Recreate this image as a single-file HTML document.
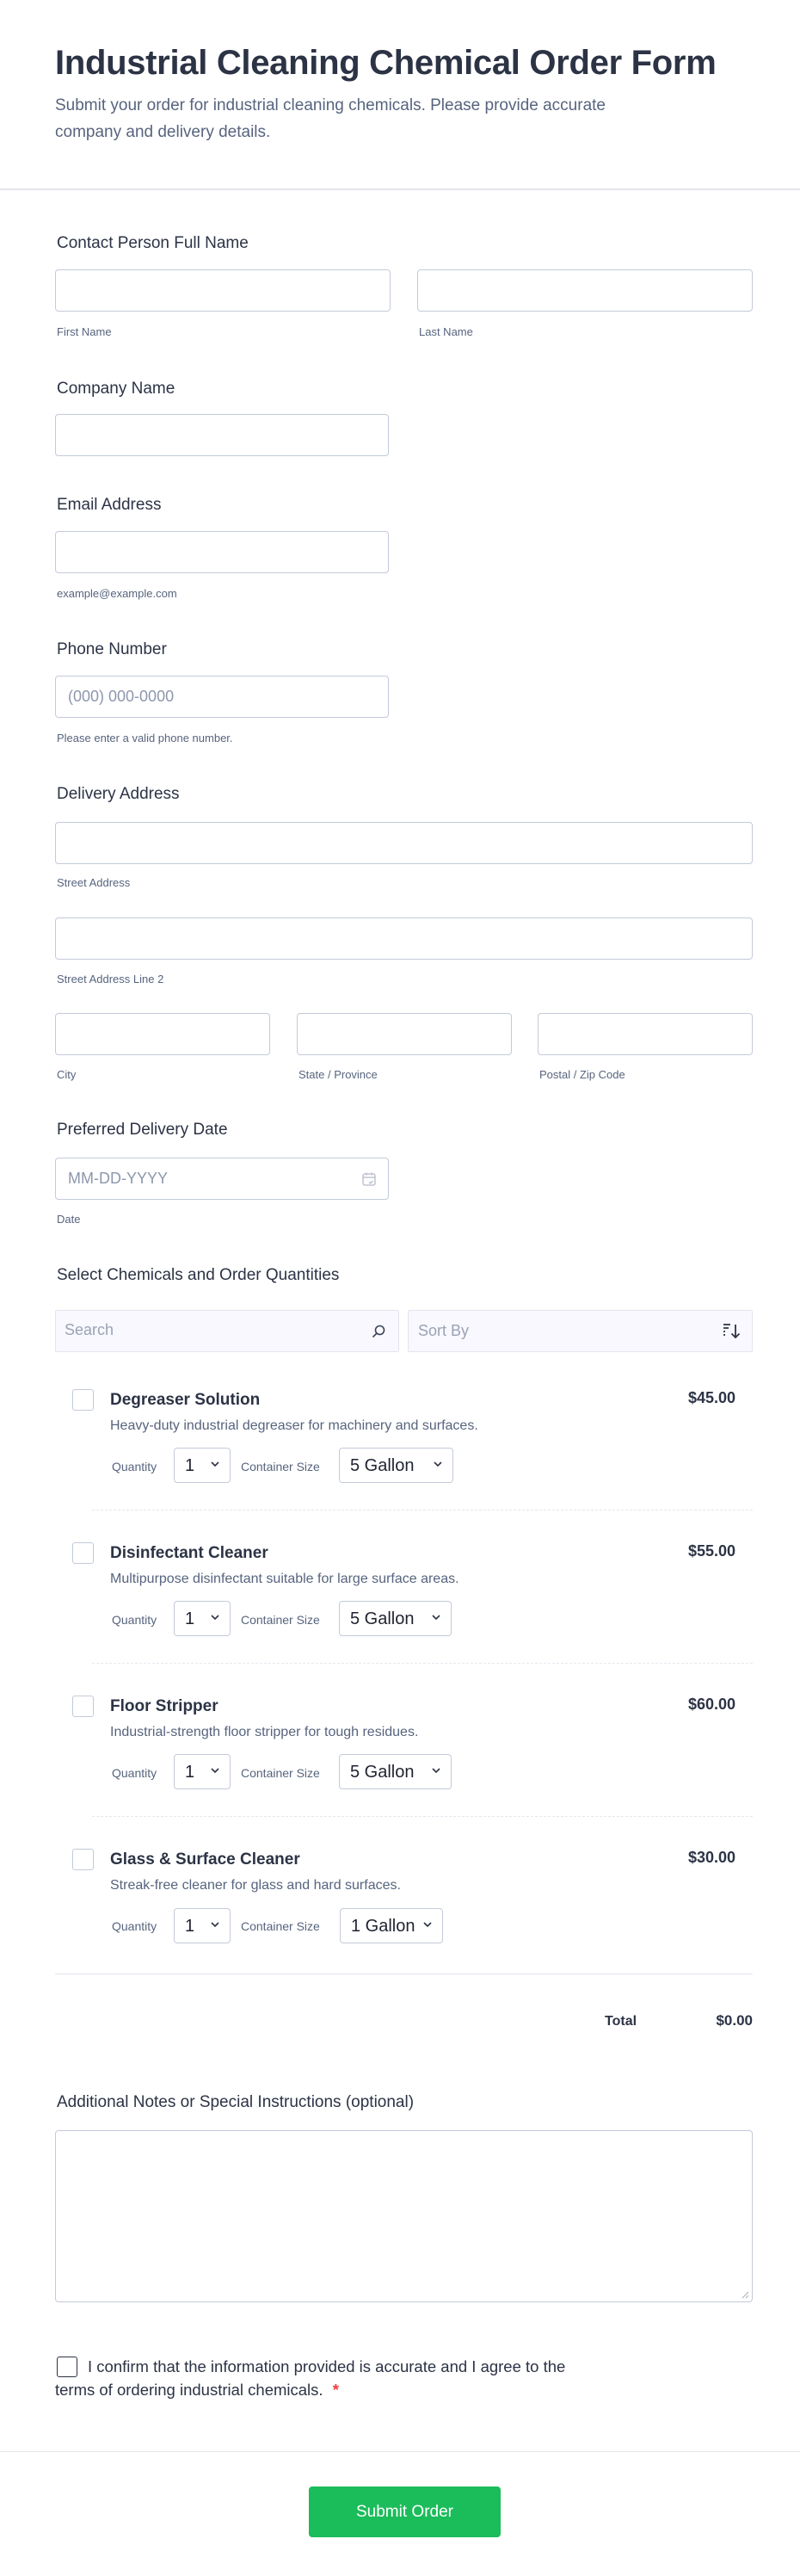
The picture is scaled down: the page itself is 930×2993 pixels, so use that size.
<!DOCTYPE html>
<html><head><meta charset="utf-8"><style>
*{box-sizing:border-box;margin:0;padding:0}
body{width:930px;height:2993px;background:#fff;font-family:"Liberation Sans",Arial,sans-serif;color:#2c3345;position:relative;overflow:hidden}
.a{position:absolute}
h1{position:absolute;left:64px;top:51px;font-size:40px;font-weight:bold;color:#2c3345;letter-spacing:-0.3px}
.sub{left:64px;top:107px;font-size:19px;line-height:31px;color:#57647e;width:720px}
.hr{left:0;width:930px;height:2px;background:#e3e5ec}
.lbl{font-size:19px;color:#2c3345;left:66px}
.in{border:1px solid #c3cad8;border-radius:4px;background:#fff;height:49px}
.sl{font-size:13px;color:#57647e}
.ph{font-size:18px;color:#8d97ac;left:14px;top:13px}
.cb{width:25px;height:25px;border:1px solid #c3cad8;border-radius:3px;left:84px;background:#fff}
.nm{left:128px;font-size:19px;font-weight:bold;color:#2c3345}
.pr{right:75px;font-size:18px;font-weight:bold;color:#2c3345}
.ds{left:128px;font-size:16px;color:#57647e}
.q{font-size:14px;color:#57647e}
.sel{border:1px solid #c3cad8;border-radius:4px;height:41px;background:#fff;font-size:20px;color:#1f2330}
.sel span{position:absolute;left:12px;top:9px}
.sel svg{position:absolute;right:12px;top:15px}
.dot{left:107px;width:768px;border-top:1px dashed #e6e8ef}
</style></head><body>
<h1>Industrial Cleaning Chemical Order Form</h1>
<div class="a sub">Submit your order for industrial cleaning chemicals. Please provide accurate company and delivery details.</div>
<div class="a hr" style="top:219px"></div>

<div class="a lbl" style="top:272px">Contact Person Full Name</div>
<div class="a in" style="left:64px;top:313px;width:390px"></div>
<div class="a in" style="left:485px;top:313px;width:390px"></div>
<div class="a sl" style="left:66px;top:378px">First Name</div>
<div class="a sl" style="left:487px;top:378px">Last Name</div>

<div class="a lbl" style="top:441px">Company Name</div>
<div class="a in" style="left:64px;top:481px;width:388px"></div>

<div class="a lbl" style="top:576px">Email Address</div>
<div class="a in" style="left:64px;top:617px;width:388px"></div>
<div class="a sl" style="left:66px;top:682px">example@example.com</div>

<div class="a lbl" style="top:744px">Phone Number</div>
<div class="a in" style="left:64px;top:785px;width:388px"><div class="a ph">(000) 000-0000</div></div>
<div class="a sl" style="left:66px;top:850px">Please enter a valid phone number.</div>

<div class="a lbl" style="top:912px">Delivery Address</div>
<div class="a in" style="left:64px;top:955px;width:811px"></div>
<div class="a sl" style="left:66px;top:1018px">Street Address</div>
<div class="a in" style="left:64px;top:1066px;width:811px"></div>
<div class="a sl" style="left:66px;top:1130px">Street Address Line 2</div>
<div class="a in" style="left:64px;top:1177px;width:250px"></div>
<div class="a in" style="left:345px;top:1177px;width:250px"></div>
<div class="a in" style="left:625px;top:1177px;width:250px"></div>
<div class="a sl" style="left:66px;top:1241px">City</div>
<div class="a sl" style="left:347px;top:1241px">State / Province</div>
<div class="a sl" style="left:627px;top:1241px">Postal / Zip Code</div>

<div class="a lbl" style="top:1302px">Preferred Delivery Date</div>
<div class="a in" style="left:64px;top:1345px;width:388px"><div class="a ph">MM-DD-YYYY</div>
<svg class="a" style="right:13px;top:15px" width="18" height="18" viewBox="0 0 18 18" fill="none" stroke="#b4bac8" stroke-width="1.3"><rect x="2" y="3" width="14" height="13" rx="2"/><path d="M2 7h14M6 1.5v3M12 1.5v3M9 12.5l1.5 1.5 3-3"/></svg></div>
<div class="a sl" style="left:66px;top:1409px">Date</div>

<div class="a lbl" style="top:1471px">Select Chemicals and Order Quantities</div>
<div class="a" style="left:64px;top:1522px;width:400px;height:49px;background:#f8f8fe;border:1px solid #e3e5ec;border-radius:2px"><div class="a ph" style="left:10px;top:12px;font-size:18px;color:#9aa3b5">Search</div>
<svg class="a" style="right:14px;top:15px" width="18" height="18" viewBox="0 0 18 18" fill="none" stroke="#3a4256" stroke-width="1.6"><circle cx="10.5" cy="7.5" r="5"/><path d="M7 11l-4.5 4.5"/></svg></div>
<div class="a" style="left:474px;top:1522px;width:401px;height:49px;background:#f8f8fe;border:1px solid #e3e5ec;border-radius:2px"><div class="a ph" style="left:11px;top:13px;color:#9aa3b5">Sort By</div>
<svg class="a" style="right:12px;top:14px" width="22" height="20" viewBox="0 0 22 20" fill="none" stroke="#2c3345" stroke-width="1.8"><path d="M1 2h8M1 6h6M1 10h2M1 14h2"/><path d="M15 2v15M10.5 12.5l4.5 4.5 4.5-4.5"/></svg></div>

<div class="a cb" style="top:1614px"></div>
<div class="a nm" style="top:1616px">Degreaser Solution</div>
<div class="a pr" style="top:1614px">$45.00</div>
<div class="a ds" style="top:1648px">Heavy-duty industrial degreaser for machinery and surfaces.</div>
<div class="a q" style="left:130px;top:1696px">Quantity</div>
<div class="a sel" style="left:202px;top:1682px;width:66px"><span>1</span><svg width="10" height="7" viewBox="0 0 10 7" fill="none" stroke="#2c3345" stroke-width="1.6"><path d="M1 1l4 4 4-4"/></svg></div>
<div class="a q" style="left:280px;top:1696px">Container Size</div>
<div class="a sel" style="left:394px;top:1682px;width:133px"><span>5 Gallon</span><svg width="10" height="7" viewBox="0 0 10 7" fill="none" stroke="#2c3345" stroke-width="1.6"><path d="M1 1l4 4 4-4"/></svg></div>
<div class="a dot" style="top:1754px"></div>

<div class="a cb" style="top:1792px"></div>
<div class="a nm" style="top:1794px">Disinfectant Cleaner</div>
<div class="a pr" style="top:1792px">$55.00</div>
<div class="a ds" style="top:1826px">Multipurpose disinfectant suitable for large surface areas.</div>
<div class="a q" style="left:130px;top:1874px">Quantity</div>
<div class="a sel" style="left:202px;top:1860px;width:66px"><span>1</span><svg width="10" height="7" viewBox="0 0 10 7" fill="none" stroke="#2c3345" stroke-width="1.6"><path d="M1 1l4 4 4-4"/></svg></div>
<div class="a q" style="left:280px;top:1874px">Container Size</div>
<div class="a sel" style="left:394px;top:1860px;width:131px"><span>5 Gallon</span><svg width="10" height="7" viewBox="0 0 10 7" fill="none" stroke="#2c3345" stroke-width="1.6"><path d="M1 1l4 4 4-4"/></svg></div>
<div class="a dot" style="top:1932px"></div>

<div class="a cb" style="top:1970px"></div>
<div class="a nm" style="top:1972px">Floor Stripper</div>
<div class="a pr" style="top:1970px">$60.00</div>
<div class="a ds" style="top:2004px">Industrial-strength floor stripper for tough residues.</div>
<div class="a q" style="left:130px;top:2052px">Quantity</div>
<div class="a sel" style="left:202px;top:2038px;width:66px"><span>1</span><svg width="10" height="7" viewBox="0 0 10 7" fill="none" stroke="#2c3345" stroke-width="1.6"><path d="M1 1l4 4 4-4"/></svg></div>
<div class="a q" style="left:280px;top:2052px">Container Size</div>
<div class="a sel" style="left:394px;top:2038px;width:131px"><span>5 Gallon</span><svg width="10" height="7" viewBox="0 0 10 7" fill="none" stroke="#2c3345" stroke-width="1.6"><path d="M1 1l4 4 4-4"/></svg></div>
<div class="a dot" style="top:2110px"></div>

<div class="a cb" style="top:2148px"></div>
<div class="a nm" style="top:2150px">Glass &amp; Surface Cleaner</div>
<div class="a pr" style="top:2148px">$30.00</div>
<div class="a ds" style="top:2182px">Streak-free cleaner for glass and hard surfaces.</div>
<div class="a q" style="left:130px;top:2230px">Quantity</div>
<div class="a sel" style="left:202px;top:2217px;width:66px"><span>1</span><svg width="10" height="7" viewBox="0 0 10 7" fill="none" stroke="#2c3345" stroke-width="1.6"><path d="M1 1l4 4 4-4"/></svg></div>
<div class="a q" style="left:280px;top:2230px">Container Size</div>
<div class="a sel" style="left:395px;top:2217px;width:120px"><span>1 Gallon</span><svg width="10" height="7" viewBox="0 0 10 7" fill="none" stroke="#2c3345" stroke-width="1.6"><path d="M1 1l4 4 4-4"/></svg></div>

<div class="a" style="left:64px;top:2293px;width:811px;height:1px;background:#e3e5ec"></div>
<div class="a" style="left:703px;top:2340px;font-size:16px;font-weight:bold">Total</div>
<div class="a" style="right:55px;top:2338px;font-size:17px;font-weight:bold">$0.00</div>

<div class="a lbl" style="top:2432px">Additional Notes or Special Instructions (optional)</div>
<div class="a in" style="left:64px;top:2475px;width:811px;height:200px">
<svg class="a" style="right:3px;bottom:3px" width="9" height="9" viewBox="0 0 9 9" stroke="#aab" stroke-width="1"><path d="M8 1L1 8M8 5L5 8"/></svg></div>

<div class="a" style="left:66px;top:2738px;width:24px;height:24px;border:1.5px solid #2c3345;border-radius:3px"></div>
<div class="a" style="left:64px;top:2736px;width:610px;font-size:18.5px;line-height:27px;color:#2c3345;text-indent:38px">I confirm that the information provided is accurate and I agree to the terms of ordering industrial chemicals. <span style="color:#f23a3c;font-weight:bold;margin-left:6px">*</span></div>

<div class="a hr" style="top:2848px;height:1px"></div>
<div class="a" style="left:359px;top:2889px;width:223px;height:59px;background:#1bbc5a;border-radius:4px;color:#fff;font-size:19px;text-align:center;line-height:59px">Submit Order</div>
</body></html>
